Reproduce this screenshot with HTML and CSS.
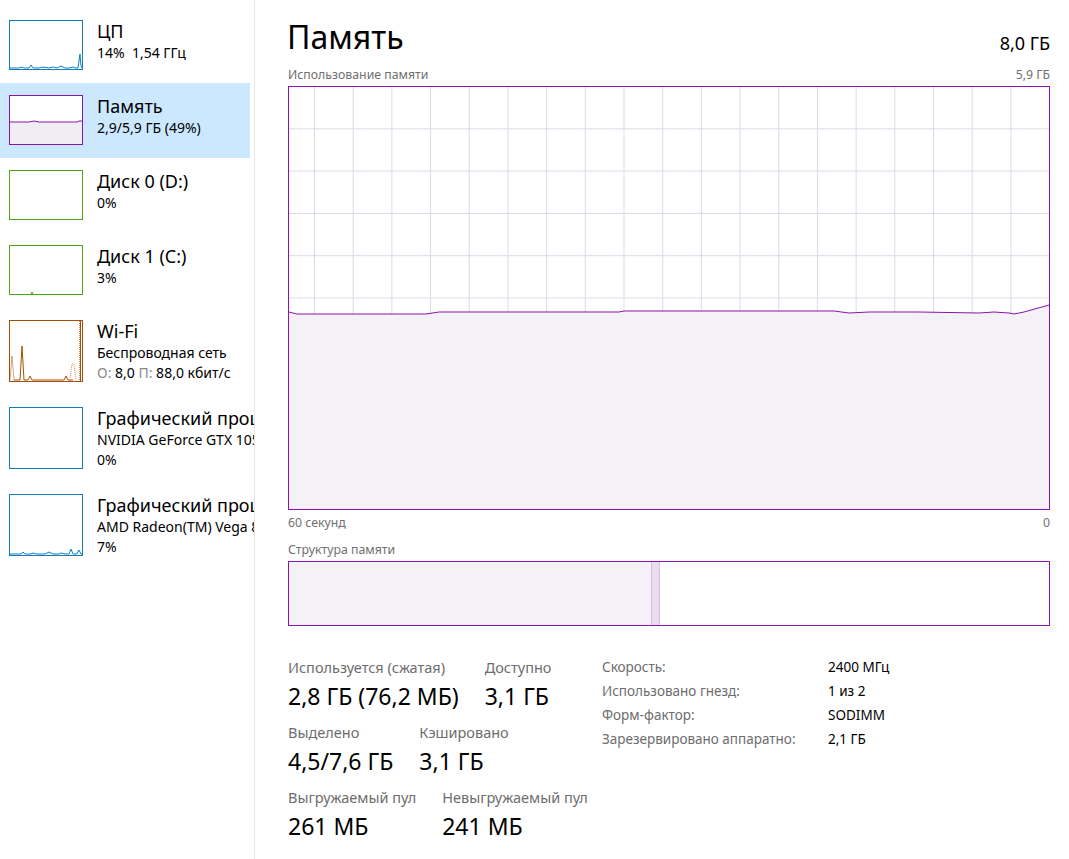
FILE: index.html
```html
<!DOCTYPE html>
<html lang="ru">
<head>
<meta charset="utf-8">
<title>Диспетчер задач — Память</title>
<link rel="stylesheet" href="styles.css">
</head>
<body>
<div class="app">
  <aside class="sidebar">
    <div class="item">
      <svg class="thumb cpu" width="74" height="50" viewBox="0 0 74 50">
        <rect x="0.5" y="0.5" width="73" height="49" fill="#fff" stroke="#117dbb"/>
        <polyline fill="none" stroke="#117dbb" stroke-width="1" points="1,48 10,48 13,47 15,48 20,48 22,45 24,48 30,48 34,47 40,48 44,47 48,48 52,46 56,48 60,48 64,47 66,48 69,48 71,34 72,46 73,48"/>
      </svg>
      <div class="txt">
        <div class="t1">ЦП</div>
        <div class="t2">14%&nbsp; 1,54 ГГц</div>
      </div>
    </div>
    <div class="item selected">
      <svg class="thumb" width="74" height="50" viewBox="0 0 74 50">
        <rect x="0.5" y="0.5" width="73" height="49" fill="#fff" stroke="#8b12ae"/>
        <path d="M1,27 L20,27 L25,26 L30,27 L68,27 L70,26 L73,26 L73,49 L1,49 Z" fill="#f1eef3"/>
        <polyline fill="none" stroke="#8b12ae" points="1,27 20,27 25,26 30,27 68,27 70,26 73,26"/>
      </svg>
      <div class="txt">
        <div class="t1">Память</div>
        <div class="t2">2,9/5,9 ГБ (49%)</div>
      </div>
    </div>
    <div class="item">
      <svg class="thumb" width="74" height="50" viewBox="0 0 74 50">
        <rect x="0.5" y="0.5" width="73" height="49" fill="#fff" stroke="#4da60c"/>
      </svg>
      <div class="txt">
        <div class="t1">Диск 0 (D:)</div>
        <div class="t2">0%</div>
      </div>
    </div>
    <div class="item">
      <svg class="thumb" width="74" height="50" viewBox="0 0 74 50">
        <rect x="0.5" y="0.5" width="73" height="49" fill="#fff" stroke="#4da60c"/>
        <polyline fill="none" stroke="#4da60c" points="22,49 23,47 24,49"/>
      </svg>
      <div class="txt">
        <div class="t1">Диск 1 (C:)</div>
        <div class="t2">3%</div>
      </div>
    </div>
    <div class="item tall">
      <svg class="thumb" width="74" height="62" viewBox="0 0 74 62">
        <rect x="0.5" y="0.5" width="73" height="61" fill="#fff" stroke="#a74f01"/>
        <polyline fill="none" stroke="#a74f01" stroke-opacity="0.5" points="1,60 3,36 5,60"/>
        <polyline fill="none" stroke="#a74f01" points="5,60 7,60 9,60 11,60 13,26 15,60 19,60 21,56 23,60 55,60 57,56 59,60 64,60"/>
        <polyline fill="none" stroke="#d88a5a" stroke-dasharray="1,1" points="61,60 63,44 65,44 67,60"/>
        <line x1="70.5" y1="1" x2="70.5" y2="61" stroke="#d88a5a" stroke-dasharray="1,1"/>
        <line x1="71.5" y1="1" x2="71.5" y2="61" stroke="#a74f01"/>
      </svg>
      <div class="txt">
        <div class="t1">Wi-Fi</div>
        <div class="t2">Беспроводная сеть</div>
        <div class="t2"><span class="dim">О:</span> 8,0 <span class="dim">П:</span> 88,0 кбит/с</div>
      </div>
    </div>
    <div class="item tall">
      <svg class="thumb" width="74" height="62" viewBox="0 0 74 62">
        <rect x="0.5" y="0.5" width="73" height="61" fill="#fff" stroke="#117dbb"/>
      </svg>
      <div class="txt">
        <div class="t1">Графический процессор 0</div>
        <div class="t2">NVIDIA GeForce GTX 1050</div>
        <div class="t2">0%</div>
      </div>
    </div>
    <div class="item tall">
      <svg class="thumb" width="74" height="62" viewBox="0 0 74 62">
        <rect x="0.5" y="0.5" width="73" height="61" fill="#fff" stroke="#117dbb"/>
        <polyline fill="none" stroke="#117dbb" points="1,60 12,60 14,58 16,60 22,60 24,59 28,60 36,60 40,58 44,60 50,60 52,59 56,60 60,60 62,55 64,60 68,60 70,56 72,60 73,60"/>
      </svg>
      <div class="txt">
        <div class="t1">Графический процессор 1</div>
        <div class="t2">AMD Radeon(TM) Vega 8 Graphics</div>
        <div class="t2">7%</div>
      </div>
    </div>
  </aside>

  <main class="main">
    <header class="head">
      <h1 class="title">Память</h1>
      <div class="total">8,0 ГБ</div>
    </header>
    <div class="caprow">
      <span>Использование памяти</span>
      <span>5,9 ГБ</span>
    </div>
    <div class="graph">
      <svg width="760" height="422" viewBox="0 0 760 422">
        <path d="M0,225 L8,227 L137,227 L150,225 L330,225 L335,224 L545,224 L560,226 L580,225 L615,225 L630,225 L690,226 L705,225 L720,226 L725,227 L735,225 L760,218 L760,422 L0,422 Z" fill="#f4f2f7"/>
        <polyline fill="none" stroke="#8b12ae" stroke-width="1" points="0,225 8,227 137,227 150,225 330,225 335,224 545,224 560,226 580,225 615,225 630,225 690,226 705,225 720,226 725,227 735,225 760,218"/>
      </svg>
    </div>
    <div class="caprow axis">
      <span>60 секунд</span>
      <span>0</span>
    </div>
    <div class="caprow struct-cap">
      <span>Структура памяти</span>
    </div>
    <div class="struct">
      <div class="seg used"></div>
      <div class="seg modified"></div>
      <div class="seg rest"></div>
    </div>

    <section class="stats">
      <div class="left">
        <div class="srow">
          <div class="stat"><div class="lab">Используется (сжатая)</div><div class="val">2,8 ГБ (76,2 МБ)</div></div>
          <div class="stat"><div class="lab">Доступно</div><div class="val">3,1 ГБ</div></div>
        </div>
        <div class="srow">
          <div class="stat"><div class="lab">Выделено</div><div class="val">4,5/7,6 ГБ</div></div>
          <div class="stat"><div class="lab">Кэшировано</div><div class="val">3,1 ГБ</div></div>
        </div>
        <div class="srow">
          <div class="stat"><div class="lab">Выгружаемый пул</div><div class="val">261 МБ</div></div>
          <div class="stat"><div class="lab">Невыгружаемый пул</div><div class="val">241 МБ</div></div>
        </div>
      </div>
      <dl class="right">
        <dt>Скорость:</dt><dd>2400 МГц</dd>
        <dt>Использовано гнезд:</dt><dd>1 из 2</dd>
        <dt>Форм-фактор:</dt><dd>SODIMM</dd>
        <dt>Зарезервировано аппаратно:</dt><dd>2,1 ГБ</dd>
      </dl>
    </section>
  </main>
</div>
</body>
</html>
```

FILE: styles.css
```css
html, body {
  margin: 0;
  padding: 0;
  background: #fff;
}
body {
  font-family: "Segoe UI", "Noto Sans", "Open Sans", sans-serif;
  color: #000;
  width: 1069px;
  height: 859px;
  overflow: hidden;
}
.app {
  display: flex;
  height: 859px;
}
.sidebar {
  width: 255px;
  flex: none;
  border-right: 1px solid #e5e5e5;
  padding-top: 8px;
  box-sizing: border-box;
  overflow: hidden;
}
.item {
  display: flex;
  align-items: flex-start;
  height: 75px;
  width: 254px;
  box-sizing: border-box;
  padding: 12px 0 0 9px;
  overflow: hidden;
}
.item.tall {
  height: 87px;
}
.item.selected {
  background: linear-gradient(#cce8ff, #cce8ff) no-repeat;
  background-size: 250px 100%;
}
.thumb {
  flex: none;
  display: block;
}
.txt {
  margin-left: 14px;
  margin-top: -1px;
  white-space: nowrap;
}
.t1 {
  font-size: 18px;
  line-height: 24px;
}
.t2 {
  font-size: 14px;
  line-height: 20px;
}
.dim {
  color: #8a8a8a;
}
.main {
  flex: 1;
  padding: 0 19px 0 33px;
  min-width: 0;
}
.head {
  display: flex;
  justify-content: space-between;
  align-items: flex-end;
  height: 58px;
}
.title {
  margin: 0;
  font-weight: 400;
  font-size: 32px;
  line-height: 44px;
  margin-left: -1px;
  margin-bottom: -1px;
}
.total {
  font-size: 18px;
  line-height: 22px;
  margin-bottom: 4px;
}
.caprow {
  display: flex;
  justify-content: space-between;
  font-size: 12.3px;
  line-height: 16px;
  color: #707070;
  align-items: flex-start;
  margin-top: 9px;
  height: 19px;
}
.graph {
  border: 1px solid #8b12ae;
  height: 422px;
  background-color: #fff;
  background-image:
    linear-gradient(to right, #dadae6 1px, transparent 1px),
    linear-gradient(to bottom, #dadae6 1px, transparent 1px);
  background-size: 38.7px 42.3px;
  background-position: 25px -1px;
}
.graph svg {
  display: block;
}
.caprow.axis {
  margin-top: 5px;
  height: 27px;
}
.caprow.struct-cap {
  margin-top: 0;
  height: 19px;
}
.struct {
  display: flex;
  border: 1px solid #8b12ae;
  height: 63px;
}
.seg.used {
  width: 362px;
  background: #f4f2f7;
  border-right: 1px solid #d8c0e2;
}
.seg.modified {
  width: 7px;
  background: #eadcf1;
  border-right: 1px solid #d8c0e2;
}
.seg.rest {
  flex: 1;
}
.stats {
  display: flex;
  margin-top: 32px;
}
.left {
  width: 314px;
}
.srow {
  display: flex;
  gap: 26px;
  height: 65px;
}
.lab {
  font-size: 14.5px;
  line-height: 18px;
  color: #6d6d6d;
  white-space: nowrap;
}
.val {
  font-size: 23px;
  line-height: 30px;
  margin-top: 5px;
  white-space: nowrap;
}
.right {
  margin: 0;
  display: grid;
  grid-template-columns: 226px auto;
  grid-auto-rows: 24px;
  font-size: 13.5px;
  line-height: 18px;
}
.right dt {
  color: #6d6d6d;
}
.right dd {
  margin: 0;
}
```
